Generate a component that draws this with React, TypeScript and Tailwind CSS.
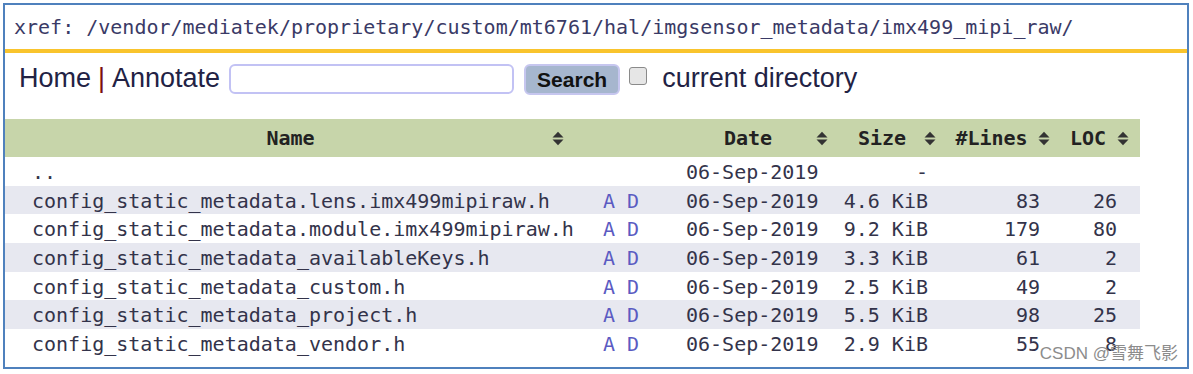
import React from "react";

const mono = "font-['DejaVu_Sans_Mono',monospace]";
const sans = "font-['Liberation_Sans',Arial,sans-serif]";

type Row = { name: string; date: string; size: string; lines: string; loc: string; ad: boolean };

const rows: Row[] = [
  { name: "..", date: "06-Sep-2019", size: "-", lines: "", loc: "", ad: false },
  { name: "config_static_metadata.lens.imx499mipiraw.h", date: "06-Sep-2019", size: "4.6 KiB", lines: "83", loc: "26", ad: true },
  { name: "config_static_metadata.module.imx499mipiraw.h", date: "06-Sep-2019", size: "9.2 KiB", lines: "179", loc: "80", ad: true },
  { name: "config_static_metadata_availableKeys.h", date: "06-Sep-2019", size: "3.3 KiB", lines: "61", loc: "2", ad: true },
  { name: "config_static_metadata_custom.h", date: "06-Sep-2019", size: "2.5 KiB", lines: "49", loc: "2", ad: true },
  { name: "config_static_metadata_project.h", date: "06-Sep-2019", size: "5.5 KiB", lines: "98", loc: "25", ad: true },
  { name: "config_static_metadata_vendor.h", date: "06-Sep-2019", size: "2.9 KiB", lines: "55", loc: "8", ad: true },
];

const cols = "grid grid-cols-[585px_80px_165px_110px_110px_85px]";

function SortIcon() {
  return (
    <svg width="12" height="15" viewBox="0 0 12 15" className="shrink-0">
      <path d="M0.5 6.5 L6 0.8 L11.5 6.5 Z" fill="#333" />
      <path d="M0.5 8.5 L6 14.2 L11.5 8.5 Z" fill="#333" />
    </svg>
  );
}

function HeadCell({ label, pl, pr }: { label: string; pl: string; pr: string }) {
  return (
    <div className={`flex items-center ${pl} ${pr}`}>
      <span className="flex-1 text-center">{label}</span>
      <SortIcon />
    </div>
  );
}

export default function App() {
  return (
    <div className="bg-white w-[1193px] h-[374px] pt-[3px] pl-[3px]">
      <div className="relative w-[1186px] h-[366px] border-2 border-[#4f81bd] overflow-hidden bg-white">
        {/* xref path */}
        <div className={`h-[44px] flex items-center pl-[9px] text-[20px] text-[#3a3a66] ${mono}`}>
          xref: /vendor/mediatek/proprietary/custom/mt6761/hal/imgsensor_metadata/imx499_mipi_raw/
        </div>
        <div className="h-[4px] bg-[#f9c42d]" />

        {/* nav row */}
        <div className={`flex items-start pt-[11px] pl-[14px] h-[66px] ${sans}`}>
          <div className="flex items-center h-[29px] text-[27px] text-[#222244] leading-none">
            <span>Home</span>
            <span className="mx-[7px] text-[#7a1010]">|</span>
            <span>Annotate</span>
          </div>
          <div className="ml-[9px] w-[285px] h-[30px] rounded-[6px] border-2 border-[#c2c2f4] bg-white" />
          <div className="ml-[10px] w-[96px] h-[31px] rounded-[6px] border-2 border-[#c6c6ef] bg-[#a6b6ce] flex items-center justify-center text-[21px] font-bold text-[#111] leading-none">
            Search
          </div>
          <div className="ml-[9px] mt-[3px] w-[18px] h-[18px] rounded-[3px] border border-[#8a8a8a] bg-[#e6e6e6]" />
          <div className="ml-[15px] h-[29px] flex items-center text-[27px] text-[#222244] leading-none">
            current directory
          </div>
        </div>

        {/* table */}
        <div className={`w-[1135px] text-[20px] ${mono}`}>
          <div className={`${cols} h-[38px] bg-[#c7d5aa] font-bold text-[#222]`}>
            <HeadCell label="Name" pl="pl-[24px]" pr="pr-[26px]" />
            <div />
            <HeadCell label="Date" pl="pl-[10px]" pr="pr-[7px]" />
            <HeadCell label="Size" pl="pl-[5px]" pr="pr-[9px]" />
            <HeadCell label="#Lines" pl="pl-0" pr="pr-[5px]" />
            <HeadCell label="LOC" pl="pl-[4px]" pr="pr-[11px]" />
          </div>
          {rows.map((r, i) => (
            <div
              key={r.name}
              className={`${cols} h-[28.7px] items-center text-[#33334a] ${i % 2 === 1 ? "bg-[#e7e8f0]" : "bg-white"}`}
            >
              <div className="pl-[27px] whitespace-nowrap">{r.name}</div>
              <div className="pl-[13px] text-[#5b5bc2]">{r.ad ? "A D" : ""}</div>
              <div className="pl-[16px]">{r.date}</div>
              <div className="pr-[17px] text-right whitespace-pre">{r.size}</div>
              <div className="pr-[15px] text-right">{r.lines}</div>
              <div className="pr-[23px] text-right">{r.loc}</div>
            </div>
          ))}
        </div>

        {/* watermark */}
        <div className="absolute right-[9px] bottom-[1px] text-[17px] text-[#8c8c8c] font-['Liberation_Sans','Noto_Sans_CJK_SC',sans-serif]">
          CSDN @雪舞飞影
        </div>
      </div>
    </div>
  );
}
